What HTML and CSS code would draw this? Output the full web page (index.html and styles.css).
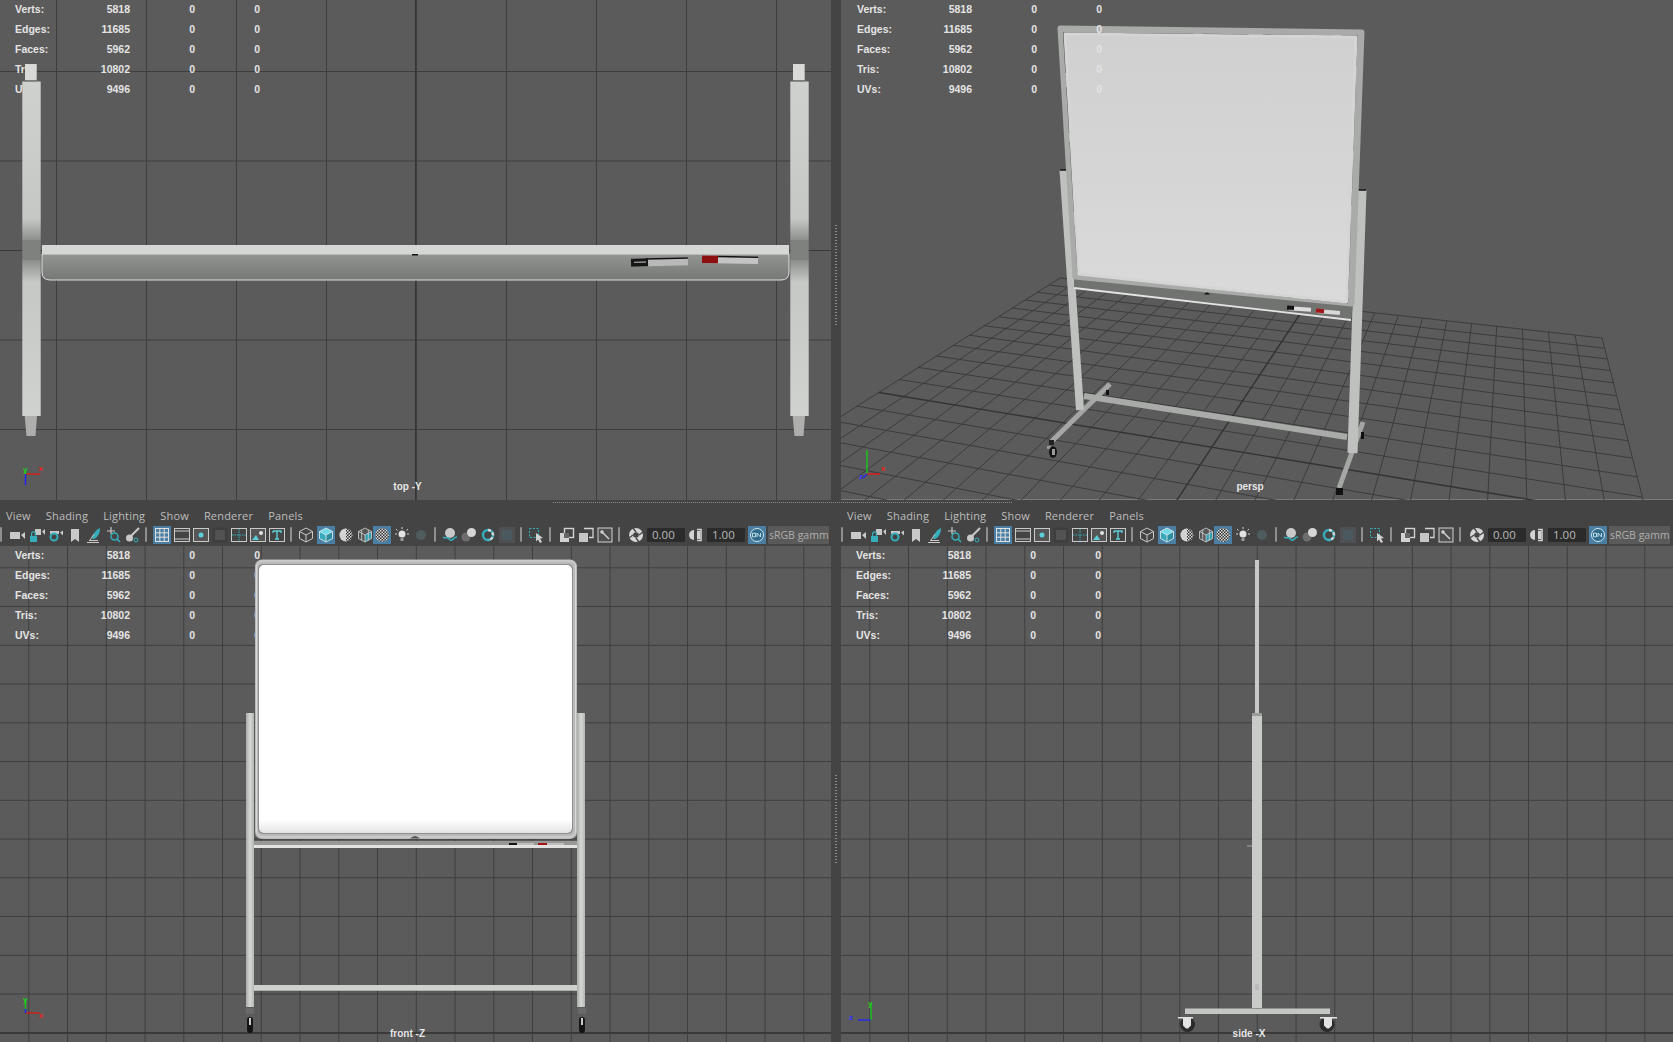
FILE: index.html
```html
<!DOCTYPE html>
<html lang="en">
<head>
<meta charset="utf-8">
<title>Maya four view</title>
<link rel="stylesheet" href="styles.css">
</head>
<body>
<svg class="sprite" aria-hidden="true">
  <defs>
    <pattern id="chk" width="3" height="3" patternUnits="userSpaceOnUse"><rect width="3" height="3" fill="#333"/><rect width="1.5" height="1.5" fill="#ddd"/><rect x="1.5" y="1.5" width="1.5" height="1.5" fill="#ddd"/></pattern>
    <linearGradient id="postV" gradientUnits="userSpaceOnUse" x1="0" y1="81" x2="0" y2="416">
      <stop offset="0" stop-color="#cfd1cf"/><stop offset=".41" stop-color="#c6c8c6"/><stop offset=".475" stop-color="#8d8f8d"/><stop offset=".476" stop-color="#7f817f"/><stop offset=".534" stop-color="#7f817f"/><stop offset=".535" stop-color="#8d8f8d"/><stop offset=".6" stop-color="#c6c8c6"/><stop offset="1" stop-color="#d0d2d0"/>
    </linearGradient>
    <linearGradient id="trayTop" x1="0" y1="0" x2="0" y2="1"><stop offset="0" stop-color="#939593"/><stop offset="1" stop-color="#767876"/></linearGradient>
    <linearGradient id="boardPersp" x1="0" y1="0" x2="0" y2="1"><stop offset="0" stop-color="#d0d0d0"/><stop offset="1" stop-color="#dadada"/></linearGradient>
    <linearGradient id="boardFront" x1="0" y1="0" x2="0" y2="1"><stop offset="0" stop-color="#fff"/><stop offset=".95" stop-color="#fff"/><stop offset="1" stop-color="#e4e4e4"/></linearGradient>
    <linearGradient id="postFront" x1="0" y1="0" x2="1" y2="0"><stop offset="0" stop-color="#a9aba9"/><stop offset=".5" stop-color="#d6d8d6"/><stop offset="1" stop-color="#b4b6b4"/></linearGradient>

    <symbol id="i-cam" viewBox="0 0 16 16"><rect x="0" y="5" width="10" height="7" fill="#c9c9c9"/><path d="M11 8l4-3v7z" fill="#c9c9c9"/></symbol>
    <symbol id="i-camlock" viewBox="0 0 16 16"><rect x="6" y="2" width="6" height="6" fill="#c9c9c9"/><path d="M13 4.5l3-2.5v6z" fill="#c9c9c9"/><rect x="1" y="9" width="7" height="6" fill="#35aeba"/><path d="M2.6 9V6.8a1.9 1.9 0 0 1 3.8 0V9" fill="none" stroke="#35aeba" stroke-width="1.2"/></symbol>
    <symbol id="i-camring" viewBox="0 0 16 16"><path d="M2 4h9v3H2z" fill="#c9c9c9"/><path d="M12 5.500l3-2v5z" fill="#c9c9c9"/><circle cx="6" cy="10" r="3.500" fill="#444" stroke="#35aeba" stroke-width="2"/></symbol>
    <symbol id="i-mark" viewBox="0 0 16 16"><path d="M4 2h8v13l-4-3-4 3z" fill="#c9c9c9"/></symbol>
    <symbol id="i-leaf" viewBox="0 0 16 16"><path d="M6 12C7 6 10 3 14 1c0 5-2 9-6 11z" fill="#35aeba"/><path d="M1 15h12v1H1zM3 13h9v1H3z" fill="#c9c9c9"/><path d="M4 13l4-6" stroke="#c9c9c9"/></symbol>
    <symbol id="i-zoom" viewBox="0 0 16 16"><circle cx="9.500" cy="9.500" r="3.500" fill="none" stroke="#35aeba" stroke-width="1.500"/><path d="M12 12l3 3" stroke="#35aeba" stroke-width="1.600"/><path d="M6 0v7M2 4h8" stroke="#c9c9c9" stroke-width="1.200"/></symbol>
    <symbol id="i-brush" viewBox="0 0 16 16"><path d="M15 1L7 9" stroke="#c9c9c9" stroke-width="2"/><circle cx="5.500" cy="11" r="3.500" fill="#c9c9c9"/><circle cx="12" cy="13" r="2" fill="none" stroke="#35aeba"/></symbol>
    <symbol id="i-grid" viewBox="0 0 16 16"><rect x="1.500" y="1.500" width="13" height="13" fill="none" stroke="#e2e2e2"/><path d="M5.800 1.500v13M10.200 1.500v13M1.500 5.800h13M1.500 10.200h13" stroke="#e2e2e2"/></symbol>
    <symbol id="i-film" viewBox="0 0 16 16"><rect x=".5" y="1.500" width="15" height="13" fill="none" stroke="#c9c9c9"/><path d="M.5 4h15M.5 12h15" stroke="#c9c9c9"/></symbol>
    <symbol id="i-res" viewBox="0 0 16 16"><rect x=".5" y="1.500" width="15" height="13" fill="#555" stroke="#c9c9c9"/><circle cx="8" cy="8" r="2.500" fill="#5cd0da"/></symbol>
    <symbol id="i-dim" viewBox="0 0 16 16"><rect x=".5" y=".5" width="15" height="15" fill="#3e3e3e"/><rect x="3" y="3" width="10" height="10" fill="#525252"/></symbol>
    <symbol id="i-field" viewBox="0 0 16 16"><rect x=".5" y="1.500" width="15" height="13" fill="none" stroke="#c9c9c9"/><path d="M1 8h14M8 2v12" stroke="#35aeba" stroke-dasharray="1.500 1"/></symbol>
    <symbol id="i-safe" viewBox="0 0 16 16"><rect x=".5" y="1.500" width="15" height="13" fill="#555" stroke="#c9c9c9"/><path d="M2 13l4-5 3 5z" fill="#5cd0da"/><circle cx="11" cy="6" r="2" fill="#e2e2e2"/></symbol>
    <symbol id="i-text" viewBox="0 0 16 16"><rect x=".5" y="1.500" width="15" height="13" fill="none" stroke="#c9c9c9"/><path d="M4 4h8v2M8 4v8M6 12h4M4 6V4" fill="none" stroke="#5cd0da" stroke-width="1.400"/></symbol>
    <symbol id="i-wire" viewBox="0 0 16 16"><path d="M8 1l6.500 3.500v7L8 15l-6.500-3.500v-7zM1.500 4.500L8 8l6.500-3.500M8 8v7" fill="none" stroke="#c9c9c9"/></symbol>
    <symbol id="i-solid" viewBox="0 0 16 16"><path d="M8 1l6.500 3.500v7L8 15l-6.500-3.500v-7z" fill="#6fdbe8"/><path d="M1.500 4.500L8 8v7l-6.500-3.500z" fill="#36a9bb"/><path d="M14.500 4.500L8 8v7l6.500-3.500z" fill="#2d8ea0"/><path d="M8 1l6.500 3.500v7L8 15l-6.500-3.500v-7zM1.500 4.500L8 8l6.500-3.500M8 8v7" fill="none" stroke="#e8e8e8" stroke-width=".8"/></symbol>
    <symbol id="i-half" viewBox="0 0 16 16"><circle cx="8" cy="8" r="6.500" fill="url(#chk)"/><path d="M8 1.500a6.500 6.500 0 0 0 0 13z" fill="#d2d2d2"/></symbol>
    <symbol id="i-wiresolid" viewBox="0 0 16 16"><path d="M8 1l6.500 3.500v7L8 15l-6.500-3.500v-7z" fill="#555"/><path d="M8 8l6.500-3.500v7L8 15z" fill="#2f9fb0"/><path d="M8 1l6.500 3.500v7L8 15l-6.500-3.500v-7zM1.500 4.500L8 8l6.500-3.500M8 8v7M4.700 2.800v10.500M11.300 2.800v10.500" fill="none" stroke="#d2d2d2" stroke-width=".8"/></symbol>
    <symbol id="i-chk" viewBox="0 0 16 16"><circle cx="8" cy="8" r="7" fill="url(#chk)"/></symbol>
    <symbol id="i-bulb" viewBox="0 0 16 16"><circle cx="8" cy="7" r="3.500" fill="#e2e2e2"/><rect x="6.500" y="11" width="3" height="3" fill="#999"/><path d="M8 0v2M2 2l1.500 1.500M14 2l-1.500 1.500M1 7h2M13 7h2" stroke="#d2d2d2"/></symbol>
    <symbol id="i-dimball" viewBox="0 0 16 16"><circle cx="8" cy="8" r="5" fill="#4e5c60"/></symbol>
    <symbol id="i-ball" viewBox="0 0 16 16"><circle cx="8" cy="6" r="5" fill="#c9c9c9"/><path d="M1 10c2 2 3 0 5 1s2 3 4 2 2-3 5-3" fill="none" stroke="#35aeba" stroke-width="1.600"/></symbol>
    <symbol id="i-balls" viewBox="0 0 16 16"><circle cx="5" cy="10" r="4.500" fill="#6d6d6d"/><circle cx="10.500" cy="5.500" r="4.500" fill="#d6d6d6"/></symbol>
    <symbol id="i-ring" viewBox="0 0 16 16"><circle cx="8" cy="8" r="5" fill="none" stroke="#35aeba" stroke-width="2.400"/><path d="M8 3a5 5 0 0 1 0 10" fill="none" stroke="#d6d6d6" stroke-width="2.400" stroke-dasharray="3 2"/></symbol>
    <symbol id="i-dimsq" viewBox="0 0 16 16"><rect width="16" height="16" fill="#505052"/><rect x="3" y="3" width="10" height="10" fill="#4a5a5e"/></symbol>
    <symbol id="i-pick" viewBox="0 0 16 16"><rect x="1.500" y="1.500" width="9" height="9" fill="none" stroke="#35aeba" stroke-dasharray="2 1.500"/><path d="M8 6l7 5-3 .5 2 3.500-2 1-2-3.500-2 2z" fill="#d2d2d2"/></symbol>
    <symbol id="i-iso" viewBox="0 0 16 16"><rect x="5.500" y="1.500" width="9" height="9" fill="none" stroke="#d2d2d2" stroke-width="1.400"/><rect x="1" y="6" width="9" height="9" fill="#d2d2d2"/><rect x="5" y="6" width="5" height="5" fill="#666"/></symbol>
    <symbol id="i-xray" viewBox="0 0 16 16"><path d="M6 1.500h9v9H11" fill="none" stroke="#d2d2d2" stroke-width="1.300"/><rect x="1" y="6" width="9" height="9" fill="#c6c6c6"/></symbol>
    <symbol id="i-tool" viewBox="0 0 16 16"><rect x="1" y="1" width="14" height="14" fill="#4e4e4e" stroke="#d2d2d2"/><path d="M4 4l8 8" stroke="#d2d2d2" stroke-width="1.400"/><circle cx="5" cy="5" r="1.700" fill="#d2d2d2"/></symbol>
    <symbol id="i-iris" viewBox="0 0 16 16"><circle cx="8" cy="8" r="7" fill="#d6d6d6"/><circle cx="8" cy="8" r="2.800" fill="#444"/><path d="M8 5L5 1M11 8l4-3M8 11l3 4M5 8L1 11" stroke="#444" stroke-width="1.300"/></symbol>
    <symbol id="i-gamma" viewBox="0 0 16 16"><path d="M6 3a5 5 0 0 0 0 10z" fill="#d2d2d2"/><path d="M9 2.500h4v11H9" fill="none" stroke="#d2d2d2" stroke-width="1.600"/><rect x="9" y="4" width="3" height="8" fill="#d2d2d2"/></symbol>
    <symbol id="i-on" viewBox="0 0 16 16"><circle cx="8" cy="8" r="6.500" fill="#2f6a8b" stroke="#d2e6ef" stroke-width="1"/><path d="M3.500 6.200h3v3.600h-3zM8 10V6l3.500 4V6" fill="none" stroke="#cfe8f2" stroke-width=".9"/></symbol>
  </defs>
</svg>

<main class="app">
  <section class="panel panel-top-left">
    <div class="viewport vp-top">
      <div class="hud">
        <span>Verts:</span><span>5818</span><span>0</span><span>0</span>
        <span>Edges:</span><span>11685</span><span>0</span><span>0</span>
        <span>Faces:</span><span>5962</span><span>0</span><span>0</span>
        <span>Tris:</span><span>10802</span><span>0</span><span>0</span>
        <span>UVs:</span><span>9496</span><span>0</span><span>0</span>
      </div>
      <svg class="scene" viewBox="0 0 831 500">
        <g id="top-post">
          <path d="M25 64h11.700v17H25z" fill="#d9d9d7"/>
          <path d="M25 81h11.700" stroke="#222"/>
          <rect x="22.300" y="81.500" width="18.400" height="334.500" fill="url(#postV)"/>
          <path d="M24.700 416H37l-1.500 20h-9z" fill="#aeaeac"/>
        </g>
        <use href="#top-post" x="768"/>
        <path d="M42 254h747v18q0 8-8 8H50q-8 0-8-8z" fill="url(#trayTop)" stroke="#e0e0e0"/>
        <rect x="42" y="245" width="747" height="9" fill="#d5d7d5"/>
        <rect x="412" y="254" width="6" height="1.500" fill="#111"/>
        <g transform="rotate(-1.500 660 262)">
          <rect x="631" y="258" width="57" height="8" fill="#b9b9b9"/>
          <rect x="631" y="258" width="17" height="8" fill="#161616"/>
          <rect x="646" y="258" width="42" height="1.500" fill="#111"/>
          <rect x="634" y="261" width="12" height="1.300" fill="#999"/>
        </g>
        <g transform="rotate(.8 730 260)">
          <rect x="702" y="256" width="56" height="7.500" fill="#c4c4c4"/>
          <rect x="702" y="256" width="16" height="7.500" fill="#8d1010"/>
          <rect x="718" y="256" width="40" height="1.500" fill="#111"/>
        </g>
        <path d="M25.500 474h15" stroke="#e11" stroke-width="1.200"/>
        <path d="M25.500 474v11" stroke="#22f" stroke-width="1.500"/>
        <path d="M25.500 470v4" stroke="#1c1" stroke-width="1.500"/>
        <text class="axis axis-g" x="23" y="472">y</text>
        <text class="axis axis-r" x="38.500" y="471">x</text>
      </svg>
      <div class="view-label">top -Y</div>
    </div>
  </section>

  <div class="splitter"><i class="grip grip-top"></i></div>

  <section class="panel panel-top-right">
    <div class="viewport vp-persp">
      <svg class="scene" viewBox="841 0 832 500">
        <path class="floor" d="M1060 278L1602 338M1048.900 285L1604.600 348.200M1037.400 292.300L1607.300 359M1025.200 300L1610.200 370.500M1012.300 308.100L1613.400 382.800M998.800 316.700L1616.700 395.800M984.500 325.700L1620.200 409.800M969.500 335.200L1624 424.700M953.500 345.300L1628.100 440.800M936.500 356L1632.500 458.100M918.500 367.400L1637.200 476.800M899.400 379.500L1642.400 497M857.200 406.200L1411 501M834 421L1280 501M808.700 436.800L1151 501M781.700 453.900L1021 501M752.500 472.300L891 501M1060 278L677 520M1078.900 280.100L717.900 520M1098.100 282.200L758.500 520M1117.600 284.400L799.300 520M1137.300 286.500L839.600 520M1157.300 288.800L880.300 520M1177.600 291L920.900 520M1198.200 293.300L961.300 520M1219.100 295.600L1001.900 520M1240.400 298L1042.600 520M1261.900 300.400L1082.900 520M1283.800 302.800L1123.500 520M1328.500 307.700L1204.100 520M1351.500 310.300L1244.800 520M1374.800 312.900L1285.300 520M1398.400 315.500L1325.600 520M1422.500 318.100L1366 520M1446.900 320.800L1406.500 520M1471.600 323.600L1446.600 520M1496.700 326.400L1486.600 520M1522.500 329.200L1527.300 520M1548.500 332L1567.500 520M1575 335L1607.700 520M1602 338L1648.200 520"/>
        <path class="floor floor-axis" d="M879 392.500L1648 519M1306 305L1163.700 520"/>
        <path d="M1110 384L1051 442" stroke="#a5a7a5" stroke-width="5"/>
        <rect x="1049" y="440" width="5" height="5" fill="#222"/>
        <rect x="1047" y="446" width="8" height="3" fill="#999"/>
        <ellipse cx="1053" cy="452" rx="4" ry="6" fill="#151515"/>
        <rect x="1052" y="449" width="3" height="6" fill="#999"/>
        <rect x="1106" y="390" width="3" height="5" fill="#111"/>
        <path d="M1363 422l-24 66" stroke="#a5a7a5" stroke-width="5"/>
        <rect x="1361" y="432" width="3" height="7" fill="#111"/>
        <rect x="1336" y="488" width="7" height="7" fill="#111"/>
        <path d="M1063.500 170L1080 410" stroke="#bfc1bf" stroke-width="8"/>
        <path d="M1361.500 190L1352.500 453" stroke="#bfc1bf" stroke-width="10"/>
        <path d="M1060 170h7M1357 190h9" stroke="#151515" stroke-width="1.500"/>
        <path d="M1084 396l263 41" stroke="#a9aba9" stroke-width="6"/>
        <path d="M1074 276l279 27-2 17-277-32z" fill="#717371"/>
        <path d="M1074 288l277 32" stroke="#e4e4e4" stroke-width="1.800"/>
        <path d="M1060 28l302 4-10 272-277-27z" fill="#a9aba9" stroke="#a9aba9" stroke-width="5" stroke-linejoin="round"/>
        <path d="M1063.500 33l293.500 3-9.500 267-269.500-29z" fill="none" stroke="#474747" stroke-width="1.100" stroke-dasharray="46 14 70 9"/>
        <path d="M1065 34l291 3-9.500 265-267.500-28z" fill="url(#boardPersp)" stroke="#d5d5d5" stroke-width="3" stroke-linejoin="round"/>
        <path d="M1204 294.500q3-4 6 0z" fill="#111"/>
        <rect x="1289" y="307" width="22" height="4" fill="#dedede" transform="rotate(4 1300 309)"/>
        <rect x="1287" y="306.500" width="7" height="4" fill="#111" transform="rotate(4 1300 309)"/>
        <rect x="1317" y="310" width="23" height="4" fill="#d8d8d8" transform="rotate(5 1328 312)"/>
        <rect x="1316" y="309.500" width="8" height="4" fill="#a01515" transform="rotate(5 1328 312)"/>
        <path d="M867 474v-24" stroke="#1c1" stroke-width="1.300"/>
        <path d="M867 474h13" stroke="#e11" stroke-width="1.300"/>
        <path d="M867 474l-4 4" stroke="#22f" stroke-width="1.300"/>
        <text class="axis axis-r" x="881" y="471">x</text>
        <text class="axis axis-b" x="859" y="479">z</text>
      </svg>
      <div class="hud hud-over">
        <span>Verts:</span><span>5818</span><span>0</span><span>0</span>
        <span>Edges:</span><span>11685</span><span>0</span><span>0</span>
        <span>Faces:</span><span>5962</span><span>0</span><span>0</span>
        <span>Tris:</span><span>10802</span><span>0</span><span>0</span>
        <span>UVs:</span><span>9496</span><span>0</span><span>0</span>
      </div>
      <div class="view-label">persp</div>
    </div>
  </section>

  <section class="panel panel-bottom-left">
    <header class="toolbar">
      <nav class="menu"><span>View</span><span>Shading</span><span>Lighting</span><span>Show</span><span>Renderer</span><span>Panels</span></nav>
      <div class="tools">
        <i class="sep sep-first"></i>
        <svg class="ic"><use href="#i-cam"/></svg><svg class="ic"><use href="#i-camlock"/></svg><svg class="ic"><use href="#i-camring"/></svg><svg class="ic"><use href="#i-mark"/></svg><svg class="ic"><use href="#i-leaf"/></svg><svg class="ic"><use href="#i-zoom"/></svg><svg class="ic"><use href="#i-brush"/></svg>
        <i class="sep"></i>
        <span class="btn on"><svg class="ic"><use href="#i-grid"/></svg></span><svg class="ic"><use href="#i-film"/></svg><svg class="ic"><use href="#i-res"/></svg><svg class="ic"><use href="#i-dim"/></svg><svg class="ic"><use href="#i-field"/></svg><svg class="ic"><use href="#i-safe"/></svg><svg class="ic"><use href="#i-text"/></svg>
        <i class="sep"></i>
        <svg class="ic"><use href="#i-wire"/></svg><span class="btn on"><svg class="ic"><use href="#i-solid"/></svg></span><svg class="ic"><use href="#i-half"/></svg><svg class="ic"><use href="#i-wiresolid"/></svg><span class="btn on tuck"><svg class="ic"><use href="#i-chk"/></svg></span><svg class="ic"><use href="#i-bulb"/></svg><svg class="ic"><use href="#i-dimball"/></svg>
        <i class="sep"></i>
        <svg class="ic"><use href="#i-ball"/></svg><svg class="ic"><use href="#i-balls"/></svg><svg class="ic"><use href="#i-ring"/></svg><svg class="ic"><use href="#i-dimsq"/></svg>
        <i class="sep"></i>
        <svg class="ic"><use href="#i-pick"/></svg>
        <i class="sep sep-wide"></i>
        <svg class="ic"><use href="#i-iso"/></svg><svg class="ic"><use href="#i-xray"/></svg><svg class="ic"><use href="#i-tool"/></svg>
        <i class="sep sep-wide"></i>
        <svg class="ic"><use href="#i-iris"/></svg><span class="field">0.00</span><svg class="ic"><use href="#i-gamma"/></svg><span class="field">1.00</span>
        <span class="btn on"><svg class="ic"><use href="#i-on"/></svg></span>
        <span class="gamma">sRGB gamm</span>
      </div>
    </header>
    <div class="viewport vp-ortho vp-front">
      <div class="hud">
        <span>Verts:</span><span>5818</span><span>0</span><span>0</span>
        <span>Edges:</span><span>11685</span><span>0</span><span>0</span>
        <span>Faces:</span><span>5962</span><span>0</span><span>0</span>
        <span>Tris:</span><span>10802</span><span>0</span><span>0</span>
        <span>UVs:</span><span>9496</span><span>0</span><span>0</span>
      </div>
      <svg class="scene" viewBox="0 546 831 496">
        <rect x="246" y="713" width="8" height="294" fill="url(#postFront)"/>
        <rect x="577" y="713" width="8" height="294" fill="url(#postFront)"/>
        <rect x="254" y="985" width="323" height="5.700" fill="#cfd1cf"/>
        <rect x="246" y="1008" width="8" height="6" fill="#6a6a6a"/>
        <rect x="578" y="1008" width="8" height="6" fill="#6a6a6a"/>
        <rect x="247" y="1017" width="6" height="16" rx="3" fill="#151515"/>
        <rect x="579" y="1017" width="6" height="16" rx="3" fill="#151515"/>
        <rect x="249" y="1018" width="2" height="7" fill="#ccc"/>
        <rect x="581" y="1018" width="2" height="7" fill="#ccc"/>
        <rect x="254" y="841" width="323" height="4.500" fill="#979997"/>
        <rect x="254" y="845" width="323" height="3" fill="#e2e2e0"/>
        <rect x="509" y="843" width="8" height="2" fill="#111"/>
        <rect x="517" y="843.500" width="17" height="1" fill="#e8e8e8"/>
        <rect x="538" y="843" width="9" height="2" fill="#a01515"/>
        <rect x="547" y="843.500" width="17" height="1" fill="#e8e8e8"/>
        <rect x="255" y="559.500" width="322" height="279.500" rx="7" fill="#b9bbb9"/>
        <rect x="256.500" y="561" width="319" height="276" rx="6" fill="none" stroke="#d8d8d8"/>
        <rect x="258" y="564" width="315" height="270" rx="5" fill="#8d8f8d"/>
        <rect x="259" y="565" width="313" height="268" rx="5" fill="url(#boardFront)"/>
        <path d="M410 838.500q5-5 10 0z" fill="#555"/>
        <path d="M25.500 1013h14" stroke="#e11" stroke-width="1.200"/>
        <path d="M25.500 1013v-14" stroke="#1c1" stroke-width="1.300"/>
        <path d="M25.500 1013v-4" stroke="#22f" stroke-width="1.500"/>
        <text class="axis axis-g" x="23" y="1002">y</text>
        <text class="axis axis-r" x="39" y="1018">x</text>
      </svg>
      <div class="view-label">front -Z</div>
    </div>
  </section>

  <div class="splitter"><i class="grip grip-lower"></i></div>

  <section class="panel panel-bottom-right">
    <header class="toolbar">
      <nav class="menu"><span>View</span><span>Shading</span><span>Lighting</span><span>Show</span><span>Renderer</span><span>Panels</span></nav>
      <div class="tools">
        <i class="sep sep-first"></i>
        <svg class="ic"><use href="#i-cam"/></svg><svg class="ic"><use href="#i-camlock"/></svg><svg class="ic"><use href="#i-camring"/></svg><svg class="ic"><use href="#i-mark"/></svg><svg class="ic"><use href="#i-leaf"/></svg><svg class="ic"><use href="#i-zoom"/></svg><svg class="ic"><use href="#i-brush"/></svg>
        <i class="sep"></i>
        <span class="btn on"><svg class="ic"><use href="#i-grid"/></svg></span><svg class="ic"><use href="#i-film"/></svg><svg class="ic"><use href="#i-res"/></svg><svg class="ic"><use href="#i-dim"/></svg><svg class="ic"><use href="#i-field"/></svg><svg class="ic"><use href="#i-safe"/></svg><svg class="ic"><use href="#i-text"/></svg>
        <i class="sep"></i>
        <svg class="ic"><use href="#i-wire"/></svg><span class="btn on"><svg class="ic"><use href="#i-solid"/></svg></span><svg class="ic"><use href="#i-half"/></svg><svg class="ic"><use href="#i-wiresolid"/></svg><span class="btn on tuck"><svg class="ic"><use href="#i-chk"/></svg></span><svg class="ic"><use href="#i-bulb"/></svg><svg class="ic"><use href="#i-dimball"/></svg>
        <i class="sep"></i>
        <svg class="ic"><use href="#i-ball"/></svg><svg class="ic"><use href="#i-balls"/></svg><svg class="ic"><use href="#i-ring"/></svg><svg class="ic"><use href="#i-dimsq"/></svg>
        <i class="sep"></i>
        <svg class="ic"><use href="#i-pick"/></svg>
        <i class="sep sep-wide"></i>
        <svg class="ic"><use href="#i-iso"/></svg><svg class="ic"><use href="#i-xray"/></svg><svg class="ic"><use href="#i-tool"/></svg>
        <i class="sep sep-wide"></i>
        <svg class="ic"><use href="#i-iris"/></svg><span class="field">0.00</span><svg class="ic"><use href="#i-gamma"/></svg><span class="field">1.00</span>
        <span class="btn on"><svg class="ic"><use href="#i-on"/></svg></span>
        <span class="gamma">sRGB gamm</span>
      </div>
    </header>
    <div class="viewport vp-ortho vp-side">
      <div class="hud">
        <span>Verts:</span><span>5818</span><span>0</span><span>0</span>
        <span>Edges:</span><span>11685</span><span>0</span><span>0</span>
        <span>Faces:</span><span>5962</span><span>0</span><span>0</span>
        <span>Tris:</span><span>10802</span><span>0</span><span>0</span>
        <span>UVs:</span><span>9496</span><span>0</span><span>0</span>
      </div>
      <svg class="scene" viewBox="841 546 832 496">
        <rect x="1255" y="560" width="4" height="153" fill="#c8cac8"/>
        <rect x="1252" y="713" width="10" height="295" fill="#c9cbc9"/>
        <rect x="1252" y="713" width="10" height="3" fill="#9a9c9a"/>
        <path d="M1247 846h5" stroke="#aaa"/>
        <path d="M1255 985h4M1255 987h4M1255 989h4" stroke="#aaa"/>
        <rect x="1185" y="1008.500" width="145" height="5.500" fill="#c4c6c4"/>
        <circle cx="1187.500" cy="1024.500" r="7.500" fill="#2b2b2b"/>
        <circle cx="1327" cy="1024.500" r="7.500" fill="#2b2b2b"/>
        <path d="M1178 1017h15v1.500h-2v7l-3 3h-2l-3-3v-7h-5z" fill="#e2e2e2"/>
        <path d="M1320 1017h17v1.500h-5v7l-3 3h-2l-3-3v-7h-4z" fill="#e2e2e2"/>
        <path d="M858 1020h13" stroke="#22f" stroke-width="1.300"/>
        <path d="M871 1020v-17" stroke="#1c1" stroke-width="1.300"/>
        <text class="axis axis-b" x="849" y="1020">z</text>
        <text class="axis axis-g" x="868" y="1006">y</text>
      </svg>
      <div class="view-label">side -X</div>
    </div>
  </section>
  <i class="dots"></i>
</main>
</body>
</html>
```

FILE: styles.css
```css
* { box-sizing: border-box; }

html, body {
  margin: 0;
  height: 100%;
  overflow: hidden;
  background: #444;
}

.sprite {
  position: absolute;
  width: 0;
  height: 0;
}

.app {
  position: relative;
  display: grid;
  grid-template-columns: 831px 10px 832px;
  grid-template-rows: 500px 542px;
  width: 1673px;
  height: 1042px;
  background: #444;
  font-family: "Liberation Sans", Arial, sans-serif;
}

.panel {
  display: flex;
  flex-direction: column;
  min-width: 0;
  overflow: hidden;
}

.splitter {
  position: relative;
  background: #444;
}

.grip {
  position: absolute;
  left: 4px;
  width: 2px;
  background: repeating-linear-gradient(#8a8a8a 0 1px, transparent 1px 3px);
}

.grip-top { top: 225px; height: 100px; }
.grip-lower { top: 275px; height: 90px; }

.dots {
  position: absolute;
  left: 553px;
  top: 502px;
  width: 459px;
  height: 1px;
  background: repeating-linear-gradient(90deg, #8a8a8a 0 1px, transparent 1px 2px);
}

/* toolbar */
.toolbar {
  flex: 0 0 46px;
  background: #444;
  overflow: hidden;
}

.menu {
  display: flex;
  gap: 15px;
  height: 24px;
  padding: 8px 0 0 6px;
  font: 11px/16px "Open Sans", sans-serif;
  letter-spacing: .18px;
  color: #bdbdbd;
}

.tools {
  display: flex;
  align-items: center;
  gap: 3px;
  height: 21px;
  white-space: nowrap;
}

.ic {
  flex: 0 0 16px;
  width: 16px;
  height: 16px;
}

.sep {
  flex: 0 0 2px;
  height: 15px;
  margin: 0 3px 0 2px;
  border-radius: 1px;
  background: #8f8f8f;
}

.sep-first { margin: 0 5px 0 0; }
.sep-wide { margin-right: 5px; }

.btn {
  display: flex;
  flex: 0 0 18px;
  align-items: center;
  justify-content: center;
  height: 18px;
}

.on { background: #4a7fa3; }
.tuck { margin-left: -3px; }

.field {
  flex: 0 0 38px;
  height: 14px;
  padding-left: 5px;
  border-radius: 1px;
  background: #2b2b2b;
  font: 11.500px/14px "Open Sans", sans-serif;
  color: #b9b9b9;
}

.gamma {
  flex: 0 0 58px;
  height: 18px;
  margin-left: -1px;
  padding-left: 1px;
  background: #5a5a5a;
  font: 10.500px/19px "Open Sans", sans-serif;
  color: #aeaeae;
}

/* viewports */
.viewport {
  position: relative;
  flex: 1;
  overflow: hidden;
  background-color: #5b5b5b;
}

.vp-top {
  background-image:
    linear-gradient(90deg, #363636, #363636),
    linear-gradient(#3a3a3a, #3a3a3a),
    linear-gradient(90deg, #3e3e3e 1px, transparent 1px),
    linear-gradient(#3e3e3e 1px, transparent 1px);
  background-size: 1px 100%, 100% 1px, 90px 100%, 100% 89.500px;
  background-position: 415px 0, 0 250px, 56px 0, 0 71px;
  background-repeat: no-repeat, no-repeat, repeat-x, repeat-y;
}

.vp-ortho {
  background-image:
    linear-gradient(#3a3a3a, #3a3a3a),
    linear-gradient(90deg, #3e3e3e 1px, transparent 1px),
    linear-gradient(#3e3e3e 1px, transparent 1px);
  background-size: 100% 2px, 38.750px 100%, 100% 38.750px;
  background-position: 0 486px, 28.300px 0, 0 21.300px;
  background-repeat: no-repeat, repeat-x, repeat-y;
}

.vp-persp {
  box-shadow: inset 2px 0 0 #7b7b7b, inset 0 -1px 0 #7b7b7b;
  margin-left: -2px;
  padding-left: 2px;
}

.scene {
  position: absolute;
  top: 0;
  left: 0;
  width: 100%;
  height: 100%;
  display: block;
}

.vp-persp .scene {
  left: 2px;
  width: calc(100% - 2px);
}

.floor {
  fill: none;
  stroke: #3c3c3c;
  stroke-width: 1;
}

.floor-axis {
  stroke: #333;
  stroke-width: 1.400;
}

.axis {
  font: bold 8px "Liberation Sans", sans-serif;
}

.axis-r { fill: #e22; }
.axis-g { fill: #2c2; }
.axis-b { fill: #33f; }

/* heads-up display */
.hud {
  position: absolute;
  top: 0;
  left: 15px;
  display: grid;
  grid-template-columns: 62px 53px 65px 65px;
  grid-auto-rows: 20px;
  font-size: 10.500px;
  font-weight: 700;
  line-height: 19px;
  color: #e4e4e4;
}

.hud-over { left: 18px; z-index: 2; }

.hud span:not(:nth-child(4n + 1)) {
  text-align: right;
}

.view-label {
  position: absolute;
  right: 0;
  bottom: 8px;
  left: 0;
  padding-right: 16px;
  text-align: center;
  font-size: 10px;
  font-weight: 700;
  color: #e6e6e6;
}

.vp-persp .view-label { padding-right: 12px; }
.vp-ortho .view-label { bottom: 3px; }
```
